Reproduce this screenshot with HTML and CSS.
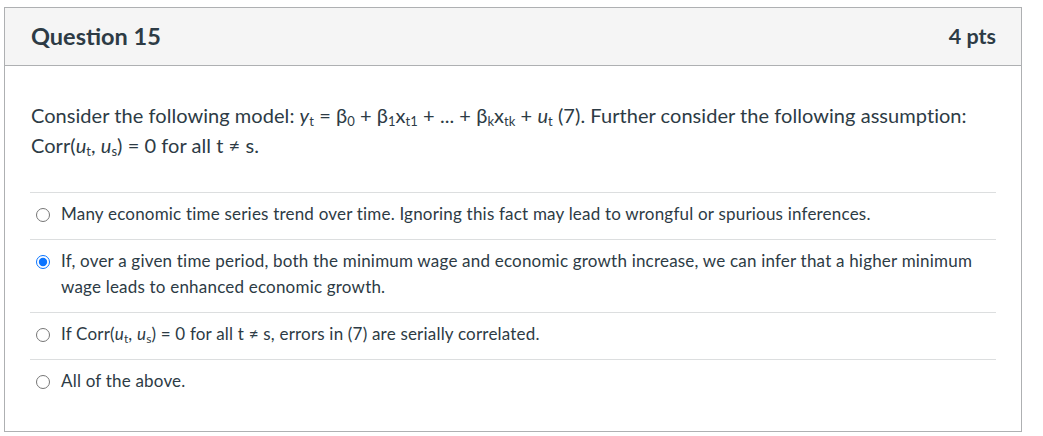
FILE: index.html
```html
<!DOCTYPE html>
<html>
<head>
<meta charset="utf-8">
<link rel="stylesheet" href="styles.css">
</head>
<body>
<div class="card">
  <div class="header">
    <h2 class="title">Question 15</h2>
    <span class="pts">4 pts</span>
  </div>
  <div class="body">
    <p class="question">Consider the following model: <i>y</i><sub>t</sub> = β<sub>0</sub> + β<sub>1</sub>x<sub>t1</sub> + ... + β<sub>k</sub>x<sub>tk</sub> + <i>u</i><sub>t</sub> (7). Further consider the following assumption: Corr(<i>u</i><sub>t</sub>, <i>u</i><sub>s</sub>) = 0 for all t ≠ s.</p>
    <div class="answers">
      <label class="answer"><input type="radio" name="q15"><span>Many economic time series trend over time. Ignoring this fact may lead to wrongful or spurious inferences.</span></label>
      <label class="answer"><input type="radio" name="q15" checked><span>If, over a given time period, both the minimum wage and economic growth increase, we can infer that a higher minimum wage leads to enhanced economic growth.</span></label>
      <label class="answer"><input type="radio" name="q15"><span>If Corr(<i>u</i><sub>t</sub>, <i>u</i><sub>s</sub>) = 0 for all t ≠ s, errors in (7) are serially correlated.</span></label>
      <label class="answer"><input type="radio" name="q15"><span>All of the above.</span></label>
    </div>
  </div>
</div>
</body>
</html>
```

FILE: styles.css
```css
html, body {
  margin: 0;
  background: #ffffff;
}
body {
  padding: 7px 0 0 4px;
  font-family: Lato, "Open Sans", sans-serif;
  color: #2d3b45;
}
.card {
  width: 1016px;
  height: 423px;
  border: 1px solid #aeb0b2;
  box-sizing: content-box;
}
.header {
  display: flex;
  justify-content: space-between;
  align-items: center;
  height: 57px;
  padding: 0 25px 0 26px;
  background: #f5f5f5;
  border-bottom: 1px solid #aeb0b2;
}
.title {
  margin: 0 0 2px 0;
  font-size: 23.5px;
  font-weight: 700;
}
.pts {
  margin-bottom: 2px;
  font-size: 21.5px;
  font-weight: 700;
}
.body {
  padding: 34px 25px 0 25px;
}
.question {
  margin: 0 0 32px 1px;
  font-size: 20px;
  letter-spacing: 0.05px;
  line-height: 30px;
}
sub {
  font-size: 13px;
  vertical-align: -3px;
  line-height: 0;
}
.answers {
  display: flex;
  flex-direction: column;
}
.answer {
  display: flex;
  align-items: flex-start;
  gap: 11px;
  padding: 8px 0 12px 6px;
  border-top: 1px solid #dcdedf;
  font-size: 17px;
  letter-spacing: 0.2px;
  line-height: 26px;
}
.answer sub {
  font-size: 12px;
  letter-spacing: 0;
}
.answer input {
  width: 14px;
  height: 14px;
  margin: 7px 0 0 0;
  flex: none;
  accent-color: #0b74ff;
}
```
